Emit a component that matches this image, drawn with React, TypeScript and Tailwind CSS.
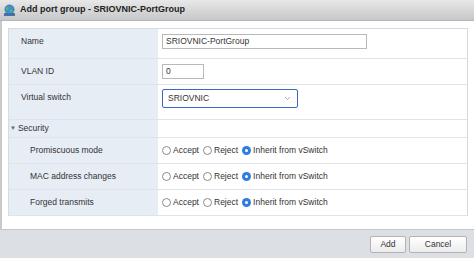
import type { ReactNode } from 'react';

function GlobeIcon() {
  return (
    <svg width="13" height="13" viewBox="0 0 13 13">
      <rect x="1" y="9" width="11" height="3" rx="0.5" fill="#4a6fa5" />
      <circle cx="6.5" cy="5.5" r="4.6" fill="#3d8fd6" stroke="#2a5f99" strokeWidth="0.6" />
      <path d="M3 3.5 Q5 2.5 6 4 Q5 6 3.5 6.5 Q2.3 5.5 3 3.5Z" fill="#5db85c" />
      <path d="M7.5 5.5 Q9.5 5 10 7 Q8.8 9.3 7.6 8.6 Q7 7 7.5 5.5Z" fill="#5db85c" />
    </svg>
  );
}

function Radio({ checked, label }: { checked?: boolean; label: string }) {
  return (
    <span className="flex items-center gap-[2px] mr-[4px]">
      {checked ? (
        <span className="w-[9px] h-[9px] rounded-full bg-[#2f7de1] flex items-center justify-center">
          <span className="w-[3px] h-[3px] rounded-full bg-white" />
        </span>
      ) : (
        <span className="w-[9px] h-[9px] rounded-full border border-[#8a8a8a] bg-white" />
      )}
      <span>{label}</span>
    </span>
  );
}

function Row({
  label,
  h,
  indent = 'pl-[12px]',
  center,
  children,
}: {
  label: ReactNode;
  h: string;
  indent?: string;
  center?: boolean;
  children?: ReactNode;
}) {
  return (
    <div className={`flex border-b border-[#dfe4ea] ${h}`}>
      <div
        className={`w-[149px] shrink-0 bg-[#e6edf5] ${indent} ${center ? 'flex items-center' : 'pt-[6px]'} text-[#333]`}
      >
        {label}
      </div>
      <div className={`flex-1 pl-[4px] ${center ? 'flex items-center' : 'pt-[5px]'}`}>{children}</div>
    </div>
  );
}

export default function App() {
  const policies = ['Promiscuous mode', 'MAC address changes', 'Forged transmits'];

  return (
    <div
      className="w-[474px] h-[258px] bg-white flex flex-col overflow-hidden text-[8.5px] text-[#333]"
      style={{ fontFamily: '"Liberation Sans", Arial, sans-serif' }}
    >
      {/* Title bar */}
      <div className="h-[21px] shrink-0 flex items-center gap-[4px] pl-[3px] bg-gradient-to-b from-[#e8e8e8] to-[#c6c7c9] border-b border-[#b5b6b8]">
        <GlobeIcon />
        <span className="font-bold text-[9px] text-[#222]">Add port group - SRIOVNIC-PortGroup</span>
      </div>

      {/* Body */}
      <div className="flex-1 border-l-[2px] border-[#c9c9c9] pl-[6px] pr-[6px] pt-[7px]">
        <div className="border border-[#d6dbe2] border-b-0">
          <Row label="Name" h="h-[30px]">
            <div className="w-[205px] h-[15px] border border-[#b9b9b9] flex items-center pl-[3px]">
              SRIOVNIC-PortGroup
            </div>
          </Row>
          <Row label="VLAN ID" h="h-[26px]">
            <div className="w-[42px] h-[15px] border border-[#b9b9b9] flex items-center pl-[3px]">0</div>
          </Row>
          <Row label="Virtual switch" h="h-[35px]">
            <div className="w-[136px] h-[19px] mt-[-1px] border-[1.5px] border-[#3b68c8] rounded-[2px] flex items-center justify-between pl-[5px] pr-[6px]">
              <span>SRIOVNIC</span>
              <svg width="7" height="5" viewBox="0 0 7 5">
                <path d="M1 1 L3.5 3.5 L6 1" fill="none" stroke="#999" strokeWidth="0.8" />
              </svg>
            </div>
          </Row>
          <div className="flex border-b border-[#dfe4ea] h-[18px]">
            <div className="w-[149px] shrink-0 bg-[#e6edf5] flex items-center pl-[1px] gap-[2px]">
              <span className="text-[6px] text-[#666]">▼</span>
              <span>Security</span>
            </div>
            <div className="flex-1" />
          </div>
          {policies.map((p) => (
            <Row key={p} label={p} h="h-[26px]" indent="pl-[21px]" center>
              <Radio label="Accept" />
              <Radio label="Reject" />
              <Radio checked label="Inherit from vSwitch" />
            </Row>
          ))}
        </div>
      </div>

      {/* Footer */}
      <div className="h-[29px] shrink-0 bg-[#dcdfe4] border-t border-[#c3c6cb] flex items-center justify-end gap-[3px] pr-[7px]">
        <button className="w-[36px] h-[17px] bg-gradient-to-b from-white to-[#ececec] border border-[#b3b3b3] rounded-[2px]">
          Add
        </button>
        <button className="w-[58px] h-[17px] bg-gradient-to-b from-white to-[#ececec] border border-[#b3b3b3] rounded-[2px]">
          Cancel
        </button>
      </div>
    </div>
  );
}
